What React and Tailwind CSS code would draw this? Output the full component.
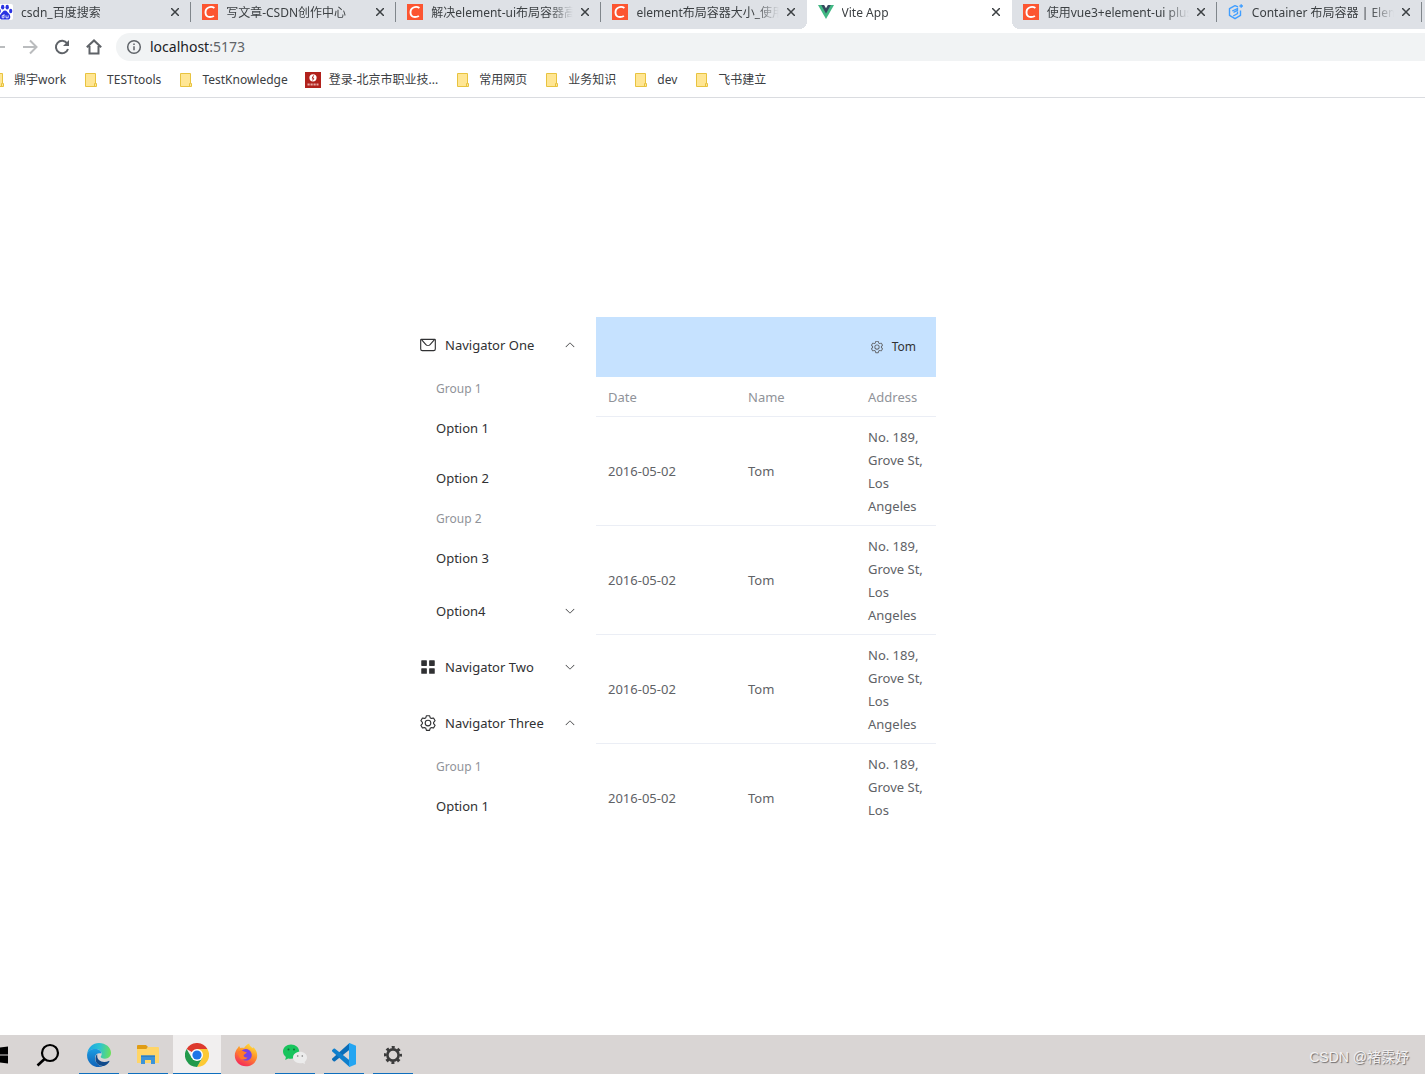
import React, { useState } from "react";

const tabs = [
  { title: "csdn_百度搜索", icon: "baidu" },
  { title: "写文章-CSDN创作中心", icon: "csdn" },
  { title: "解决element-ui布局容器高度", icon: "csdn" },
  { title: "element布局容器大小_使用vue", icon: "csdn" },
  { title: "Vite App", icon: "vue" },
  { title: "使用vue3+element-ui plus", icon: "csdn" },
  { title: "Container 布局容器 | Element", icon: "element" },
];

const bookmarks = [
  { title: "鼎宇work" },
  { title: "TESTtools" },
  { title: "TestKnowledge" },
  { title: "登录-北京市职业技...", site: true },
  { title: "常用网页" },
  { title: "业务知识" },
  { title: "dev" },
  { title: "飞书建立" },
];

const tableData = Array.from({ length: 4 }, (_, id) => ({
  id,
  date: "2016-05-02",
  name: "Tom",
  address: "No. 189, Grove St, Los Angeles",
}));

const messagePaths = [
  "M128 224v512a64 64 0 0 0 64 64h640a64 64 0 0 0 64-64V224H128zm0-64h768a64 64 0 0 1 64 64v512a128 128 0 0 1-128 128H192A128 128 0 0 1 64 736V224a64 64 0 0 1 64-64z",
  "M904 224 656.512 506.88a192 192 0 0 1-289.024 0L120 224h784zm-698.944 0 210.56 240.704a128 128 0 0 0 192.704 0L818.944 224H205.056z",
];
const settingPaths = [
  "M600.704 64a32 32 0 0 1 30.464 22.208l35.2 109.376c14.784 7.232 28.928 15.36 42.432 24.512l112.384-24.192a32 32 0 0 1 34.432 15.36L944.32 364.8a32 32 0 0 1-4.032 37.504l-77.12 85.12a357.12 357.12 0 0 1 0 49.024l77.12 85.248a32 32 0 0 1 4.032 37.504l-88.704 153.6a32 32 0 0 1-34.432 15.296L708.8 803.904c-13.44 9.088-27.648 17.28-42.368 24.512l-35.264 109.376A32 32 0 0 1 600.704 960H423.296a32 32 0 0 1-30.464-22.208L357.696 828.48a351.616 351.616 0 0 1-42.56-24.64l-112.32 24.256a32 32 0 0 1-34.432-15.36L79.68 659.2a32 32 0 0 1 4.032-37.504l77.12-85.248a357.12 357.12 0 0 1 0-48.896l-77.12-85.248A32 32 0 0 1 79.68 364.8l88.704-153.6a32 32 0 0 1 34.432-15.296l112.32 24.256c13.568-9.152 27.776-17.408 42.56-24.64l35.2-109.312A32 32 0 0 1 423.232 64H600.64zm-23.424 64H446.72l-36.352 113.088-24.512 11.968a294.113 294.113 0 0 0-34.816 20.096l-22.656 15.36-116.224-25.088-65.28 113.152 79.68 88.192-1.92 27.136a293.12 293.12 0 0 0 0 40.192l1.92 27.136-79.808 88.192 65.344 113.152 116.224-25.024 22.656 15.296a294.113 294.113 0 0 0 34.816 20.096l24.512 11.968L446.72 896h130.688l36.48-113.152 24.448-11.904a288.282 288.282 0 0 0 34.752-20.096l22.592-15.296 116.288 25.024 65.28-113.152-79.744-88.192 1.92-27.136a293.12 293.12 0 0 0 0-40.256l-1.92-27.136 79.808-88.128-65.344-113.152-116.288 24.96-22.592-15.232a287.616 287.616 0 0 0-34.752-20.096l-24.448-11.904L577.344 128zM512 320a192 192 0 1 1 0 384 192 192 0 0 1 0-384m0 64a128 128 0 1 0 0 256 128 128 0 0 0 0-256",
];
const menuPaths = [
  "M160 448a32 32 0 0 1-32-32V160a32 32 0 0 1 32-32h256a32 32 0 0 1 32 32v256a32 32 0 0 1-32 32zM608 448a32 32 0 0 1-32-32V160a32 32 0 0 1 32-32h256a32 32 0 0 1 32 32v256a32 32 0 0 1-32 32zM160 896a32 32 0 0 1-32-32V608a32 32 0 0 1 32-32h256a32 32 0 0 1 32 32v256a32 32 0 0 1-32 32zM608 896a32 32 0 0 1-32-32V608a32 32 0 0 1 32-32h256a32 32 0 0 1 32 32v256a32 32 0 0 1-32 32z",
];
const arrowPaths = [
  "M831.872 340.864 512 652.672 192.128 340.864a30.592 30.592 0 0 0-42.752 0 29.12 29.12 0 0 0 0 41.6L489.664 714.24a32 32 0 0 0 44.672 0l340.288-331.712a29.12 29.12 0 0 0 0-41.728 30.592 30.592 0 0 0-42.752 0z",
];

function ElIcon({ paths, className }) {
  return (
    <svg viewBox="0 0 1024 1024" fill="currentColor" className={className} aria-hidden="true">
      {paths.map((d) => (
        <path key={d} d={d} />
      ))}
    </svg>
  );
}

function Favicon({ name }) {
  if (name === "csdn") {
    return (
      <svg viewBox="0 0 16 16" className="size-4 shrink-0">
        <rect width="16" height="16" fill="#fc5531" />
        <path d="M12.4 4.1C10.8 2.9 8.3 2.7 6.5 3.5 4.4 4.4 3.4 6.5 3.5 8.7c.1 2.6 1.8 4.2 4.5 4.3 1.5 0 2.8-.3 3.9-1" fill="none" stroke="#fff" strokeWidth="1.9" />
      </svg>
    );
  }
  if (name === "vue") {
    return (
      <svg viewBox="0 0 16 16" className="size-4 shrink-0">
        <path d="M0 1h16L8 15z" fill="#41b883" />
        <path d="M3.2 1h9.6L8 9.4z" fill="#35495e" />
        <path d="M6.1 1h3.8L8 4.2z" fill="#fff" />
      </svg>
    );
  }
  if (name === "element") {
    return (
      <svg viewBox="0 0 16 16" className="size-4 shrink-0" fill="none" stroke="#409eff" strokeWidth="1.4">
        <path d="M10 2.9 7 1.6 1.5 4.6v6.8L7 14.7l5.5-3.3V6.5" strokeLinejoin="round" />
        <path d="M4.2 7 9.5 4.6v1.8L5.5 8.4M9.5 7.6v2L5.2 12" strokeWidth="1.3" />
        <path d="M13.2 .2v3.6M11.4 2h3.6" />
      </svg>
    );
  }
  return (
    <svg viewBox="0 0 16 16" className="size-4 shrink-0">
      <rect width="16" height="16" rx="2" fill="#fff" />
      <g fill="#2932e1">
        <ellipse cx="5.7" cy="3.2" rx="1.7" ry="2.4" />
        <ellipse cx="10.2" cy="3.2" rx="1.7" ry="2.4" />
        <ellipse cx="2.3" cy="7" rx="1.6" ry="2.2" />
        <ellipse cx="13.7" cy="7" rx="1.6" ry="2.2" />
        <path d="M8 6.5c2 0 2.6 2 4 3.2 1.6 1.4 2.2 5.8-1.2 5.8H5.2c-3.4 0-2.8-4.4-1.2-5.8C5.4 8.5 6 6.5 8 6.5z" />
      </g>
      <path d="M7 10v3.8H5.2v-2.2H7M9 11.4v2.4h2.2v-2.4" fill="none" stroke="#fff" strokeWidth=".8" />
    </svg>
  );
}

function Tab({ tab, active, onSelect }) {
  return (
    <div
      className={`relative flex min-w-0 flex-1 items-center pb-[5px] pl-[11px] pr-2 ${
        active
          ? "bg-white before:absolute before:bottom-0 before:-left-2 before:size-2 before:bg-[radial-gradient(circle_at_0_0,#dee1e6_8px,white_8px)] after:absolute after:bottom-0 after:-right-2 after:size-2 after:bg-[radial-gradient(circle_at_100%_0,#dee1e6_8px,white_8px)]"
          : ""
      }`}
    >
      <button onClick={onSelect} className="flex min-w-0 flex-1 items-center gap-2 text-left">
        <Favicon name={tab.icon} />
        <span className="min-w-0 flex-1 overflow-hidden whitespace-nowrap pt-0.5 leading-4 [mask-image:linear-gradient(to_left,transparent_4px,black_28px)]">
          {tab.title}
        </span>
      </button>
      <button aria-label={`Close ${tab.title}`} className="flex size-4 shrink-0 items-center justify-center">
        <svg viewBox="0 0 8 8" className="size-2" stroke="#3c4043" strokeWidth="1.5">
          <path d="M0 0l8 8M8 0L0 8" />
        </svg>
      </button>
    </div>
  );
}

function TabStrip() {
  const [current, setCurrent] = useState(4);
  return (
    <div className="-ml-[14px] flex h-[29px] bg-[#dee1e6] pr-[3px]">
      {tabs.map((tab, i) => (
        <React.Fragment key={tab.title}>
          <Tab tab={tab} active={i === current} onSelect={() => setCurrent(i)} />
          <span
            className={`mt-[2px] -ml-px h-5 w-px ${
              i === current || i + 1 === current ? "bg-transparent" : "bg-[#80868b]"
            }`}
          />
        </React.Fragment>
      ))}
    </div>
  );
}

function Toolbar() {
  return (
    <div className="flex h-9 items-center pb-1 pt-1 text-[#5f6368]">
      <div className="-ml-[10px] flex h-7 w-[126px] shrink-0 items-center gap-4">
        <button aria-label="Back" className="text-[#babcbe]">
          <svg viewBox="0 0 16 16" className="size-4" fill="none" stroke="currentColor" strokeWidth="2">
            <path d="M15 8H2M8 1L1.5 8 8 15" />
          </svg>
        </button>
        <button aria-label="Forward" className="text-[#babcbe]">
          <svg viewBox="0 0 16 16" className="size-4" fill="none" stroke="currentColor" strokeWidth="2">
            <path d="M1 8h13M8 1.5L14.5 8 8 14.5" />
          </svg>
        </button>
        <button aria-label="Reload">
          <svg viewBox="0 0 16 16" className="size-4" fill="none" stroke="currentColor" strokeWidth="2">
            <path d="M13.2 4.5A6.2 6.2 0 1 0 14 10" />
            <path d="M15 1v6H9z" fill="currentColor" stroke="none" />
          </svg>
        </button>
        <button aria-label="Home">
          <svg viewBox="0 0 16 16" className="size-4" fill="none" stroke="currentColor" strokeWidth="2">
            <path d="M.8 8.2L8 1.4l7.2 6.8M3.5 7v7.5h9V7" />
          </svg>
        </button>
      </div>
      <div className="flex h-7 flex-1 items-center gap-2 rounded-l-full bg-[#f1f3f4] pl-[10px]">
        <svg viewBox="0 0 16 16" className="size-4" fill="none" stroke="currentColor" strokeWidth="1.5">
          <circle cx="8" cy="8" r="6.3" />
          <path d="M8 7.2v4M8 4.5V6" />
        </svg>
        <a href="http://localhost:5173" className="text-sm leading-5 text-[#5f6368]">
          <span className="text-[#202124]">localhost</span>:5173
        </a>
      </div>
    </div>
  );
}

function BookmarkIcon({ site }) {
  if (site) {
    return (
      <svg viewBox="0 0 16 16" className="size-4 shrink-0">
        <rect width="16" height="16" fill="#b1211c" />
        <circle cx="8" cy="5.8" r="3.6" fill="#fff" />
        <path d="M8.6 3.4L7.2 6.2h1.6L7.6 8.4" stroke="#b1211c" fill="none" />
        <path d="M2.5 12.5h11" stroke="#e8a9a5" strokeWidth="2" strokeDasharray="2.2 .8" />
      </svg>
    );
  }
  return (
    <svg viewBox="0 0 16 16" className="size-4 shrink-0">
      <path d="M2.5 1.5h10v10h1v3h-11z" fill="#ffe694" stroke="#e8c33f" />
      <path d="M11.5 14.5v-3h1" fill="none" stroke="#e8c33f" />
    </svg>
  );
}

function Bookmarks() {
  return (
    <nav className="-ml-[10px] flex h-[33px] items-center gap-[17px] border-b border-[#dadce0] pb-[3px]">
      {bookmarks.map((item) => (
        <a key={item.title} href="#" className="flex shrink-0 items-center gap-2 leading-4">
          <BookmarkIcon site={item.site} />
          {item.title}
        </a>
      ))}
    </nav>
  );
}

function SubMenuTitle({ icon, title, open, nested, onClick }) {
  return (
    <button
      onClick={onClick}
      className={`flex h-14 w-full items-center pr-5 text-left ${nested ? "pl-10" : "pl-5"}`}
    >
      {icon && (
        <span className="mr-[5px] flex w-6 justify-center">
          <ElIcon paths={icon} className="size-[18px]" />
        </span>
      )}
      <span className="flex-1">{title}</span>
      <ElIcon paths={arrowPaths} className={open ? "size-3 rotate-180" : "size-3"} />
    </button>
  );
}

function MenuGroup({ title, options }) {
  return (
    <div>
      <div className="pb-1.5 pl-10 pt-2 text-xs leading-4 text-[#909399]">{title}</div>
      {options.map((option) => (
        <a key={option} href="#" className="flex h-[50px] items-center pl-10">
          {option}
        </a>
      ))}
    </div>
  );
}

function Aside() {
  const [opened, setOpened] = useState(["1", "3"]);
  const toggle = (index) =>
    setOpened((prev) => (prev.includes(index) ? prev.filter((i) => i !== index) : [...prev, index]));

  const groups = (
    <>
      <MenuGroup title="Group 1" options={["Option 1", "Option 2"]} />
      <MenuGroup title="Group 2" options={["Option 3"]} />
      <SubMenuTitle title="Option4" nested />
    </>
  );

  return (
    <aside className="w-[200px] shrink-0 overflow-y-auto text-[#303133] [scrollbar-width:none]">
      <SubMenuTitle icon={messagePaths} title="Navigator One" open={opened.includes("1")} onClick={() => toggle("1")} />
      {opened.includes("1") && groups}
      <SubMenuTitle icon={menuPaths} title="Navigator Two" open={opened.includes("2")} onClick={() => toggle("2")} />
      {opened.includes("2") && groups}
      <SubMenuTitle icon={settingPaths} title="Navigator Three" open={opened.includes("3")} onClick={() => toggle("3")} />
      {opened.includes("3") && <MenuGroup title="Group 1" options={["Option 1"]} />}
    </aside>
  );
}

function DataTable() {
  return (
    <table className="w-full table-fixed text-left leading-[23px] text-[#606266]">
      <thead>
        <tr className="border-b border-[#ebeef5] text-[#909399]">
          <th className="w-[140px] px-3 pb-[7px] pt-[9px] font-normal">Date</th>
          <th className="w-[120px] px-3 pb-[7px] pt-[9px] font-normal">Name</th>
          <th className="px-3 pb-[7px] pt-[9px] font-normal">Address</th>
        </tr>
      </thead>
      <tbody>
        {tableData.map((row) => (
          <tr key={row.id} className="border-b border-[#ebeef5]">
            <td className="px-3 pb-[7px] pt-[9px]">{row.date}</td>
            <td className="px-3 pb-[7px] pt-[9px]">{row.name}</td>
            <td className="px-3 pb-[7px] pt-[9px]">{row.address}</td>
          </tr>
        ))}
      </tbody>
    </table>
  );
}

function EdgeLogo() {
  return (
    <svg viewBox="0 0 24 24" className="size-6">
      <defs>
        <linearGradient id="edgeTop" x1="0" y1=".4" x2="1" y2=".5">
          <stop offset="0" stopColor="#1ba4e4" />
          <stop offset=".5" stopColor="#2bc3d2" />
          <stop offset="1" stopColor="#6be05a" />
        </linearGradient>
        <linearGradient id="edgeLow" x1="0" y1="0" x2="0" y2="1">
          <stop offset="0" stopColor="#1b9de2" />
          <stop offset="1" stopColor="#0f61b8" />
        </linearGradient>
      </defs>
      <path d="M.2 11C.8 4.6 6 0 12 0c6.6 0 12 4.3 12 9.8 0 3.7-2.7 5.9-6 5.9-3 0-4.3-1-4.3-1.9 0-.7 1-1.1 1-3 0-2.6-2.4-4.8-6-4.8C4 6 1.2 8.3.2 11z" fill="url(#edgeTop)" />
      <path d="M.1 11.5C.6 8 4 6 8.2 6c3.6 0 6.3 2 6.3 4.6-3.2-1.4-6.5.6-6.5 4.4 0 4 3 8 8 8.2-1.3.5-2.6.8-4 .8C5 24-.4 18.5.1 11.5z" fill="url(#edgeLow)" />
      <path d="M10.3 11.3C7 13 7.5 24 17 22.9c2.3-.9 4.2-2.5 5.4-4.5.2-.4-.2-.7-.6-.5-5.2 2.5-12.6.6-11.5-6.6z" fill="#114a8b" />
    </svg>
  );
}

function ExplorerLogo() {
  return (
    <svg viewBox="0 0 24 24" className="size-6">
      <path d="M1 3a1 1 0 0 1 1-1h8l2 2-1.5 2H1z" fill="#e09c14" />
      <path d="M1 6h9.5L12 4h10a1 1 0 0 1 1 1v15H1z" fill="#ffd567" />
      <path d="M5 12.5h14V21h-4v-4H9v4H5z" fill="#3c93d8" />
      <path d="M5 12.5h14V14H5z" fill="#2d7fc4" />
    </svg>
  );
}

function ChromeLogo() {
  return (
    <svg viewBox="0 0 24 24" className="size-6">
      <path d="M12 12L1.6 6A12 12 0 0 1 22.4 6z" fill="#dd3a2e" />
      <path d="M12 12V6h10.4A12 12 0 0 1 12 24l5.2-9z" fill="#fcc934" />
      <path d="M12 12l5.2 3L12 24A12 12 0 0 1 1.6 6l5.2 9z" fill="#229a4c" />
      <circle cx="12" cy="12" r="6" fill="#fff" />
      <circle cx="12" cy="12" r="4.6" fill="#1f74e8" />
    </svg>
  );
}

function FirefoxLogo() {
  return (
    <svg viewBox="0 0 24 24" className="size-6">
      <defs>
        <linearGradient id="foxBody" x1=".8" y1="0" x2=".3" y2="1">
          <stop offset="0" stopColor="#ffe93b" />
          <stop offset=".45" stopColor="#ff9229" />
          <stop offset="1" stopColor="#f5245c" />
        </linearGradient>
      </defs>
      <path d="M3.8 5c.3-.8 1-1.6 1.5-2 .1.8.5 1.5 1 2 1.2-.4 2.6-.4 3.8 0C11 3.5 13 1 15.2.5c0 2 1.6 3 3.4 4.8.4-.2.3-.8.3-1.2C21.5 6 23.2 9 23.2 12.5 23.2 18.5 18.2 23.3 12 23.3S.8 18.5.8 12.5C.8 9.5 2 7 3.8 5z" fill="url(#foxBody)" />
      <path d="M7 9c1-2.5 5-4 8-2 2.8 1.8 3.5 5.5 2 8-1.5 2.4-5 3.3-7.5 2C7 15.7 6 12 7 9z" fill="#7542e5" />
      <path d="M4 9c1.5-1.8 4-2 6-.6 1 .7 2 .4 2.7.8-.4 1.5-2.2 1.8-3 2.8-.4 2 1.7 3 3.8 2.3-1 2.7-5.5 3-7.5.7C4.6 13.3 4 11 4 9z" fill="#ff7a29" />
    </svg>
  );
}

function WechatLogo() {
  return (
    <svg viewBox="0 0 24 24" className="size-6">
      <path d="M8 1.5C3.5 1.5 0 4.6 0 8.5c0 2.2 1.1 4.1 2.9 5.4L2.2 17l3-1.6c.9.2 1.8.4 2.8.4 4.5 0 8.2-3.2 8.2-7.2S12.500 1.5 8 1.5z" fill="#18c45d" />
      <circle cx="5.5" cy="6.5" r="1" fill="#136b38" />
      <circle cx="11" cy="6.5" r="1" fill="#136b38" />
      <path d="M17 8.8c4 0 7 2.6 7 5.8 0 1.7-.9 3.2-2.4 4.3l.5 2.1-2.4-1.1c-.9.3-1.7.4-2.7.4-3.9 0-7-2.5-7-5.7s3.1-5.8 7-5.8z" fill="#ececec" />
      <circle cx="14.7" cy="13" r=".8" fill="#777" />
      <circle cx="19.3" cy="13" r=".8" fill="#777" />
    </svg>
  );
}

function VscodeLogo() {
  return (
    <svg viewBox="0 0 24 24" className="size-6">
      <path d="M0 15.8L17.5 0v6.7L3 18.3c-.5.4-1 .3-1.4 0L.2 17c-.3-.4-.3-.8-.2-1.2z" fill="#0a6db8" />
      <path d="M0 8.2L17.5 24v-6.7L3 5.7c-.5-.4-1-.3-1.4 0L.2 7c-.3.4-.3.8-.2 1.2z" fill="#0f7fcc" />
      <path d="M17.5 0L24 2.8v18.4L17.5 24c-.6 0-.5-.6-.5-1V1c0-.4 0-1 .5-1z" fill="#24a5f2" />
    </svg>
  );
}

function GearLogo() {
  return (
    <svg viewBox="0 0 24 24" className="size-6" fill="none" stroke="#3b3b3b">
      <circle cx="12" cy="12" r="5.6" strokeWidth="2.6" />
      <circle cx="12" cy="12" r="7.7" strokeWidth="2.6" strokeDasharray="3 3.048" strokeDashoffset="1.5" />
    </svg>
  );
}

function StartLogo() {
  return (
    <svg viewBox="0 0 18 18" className="size-[18px]" fill="#000">
      <path d="M0 3l8-1.2v6.8H0zM9 1.7L18 .5v8.1H9zM0 9.6h8v6.8L0 15.2zM9 9.6h9v7.9l-9-1.2z" />
    </svg>
  );
}

function SearchLogo() {
  return (
    <svg viewBox="0 0 24 24" className="size-6" fill="none" stroke="#000" strokeWidth="2.2">
      <circle cx="14" cy="10" r="8" />
      <path d="M8.5 16L1.5 22.5" strokeWidth="2.6" />
    </svg>
  );
}

const apps = [
  { name: "Edge", Logo: EdgeLogo, running: true },
  { name: "Explorer", Logo: ExplorerLogo, running: true },
  { name: "Chrome", Logo: ChromeLogo, running: true, focused: true },
  { name: "Firefox", Logo: FirefoxLogo },
  { name: "WeChat", Logo: WechatLogo, running: true },
  { name: "VS Code", Logo: VscodeLogo, running: true },
  { name: "Settings", Logo: GearLogo, running: true },
];

function Taskbar() {
  return (
    <footer className="flex h-[39px] items-stretch justify-between bg-[#d9d5d4]">
      <div className="-ml-[25px] flex gap-px">
        <button aria-label="Start" className="flex w-12 items-center justify-center">
          <StartLogo />
        </button>
        <button aria-label="Search" className="mr-[2px] flex w-12 items-center justify-center">
          <SearchLogo />
        </button>
        {apps.map(({ name, Logo, running, focused }) => (
          <button
            key={name}
            aria-label={name}
            className={`flex w-12 flex-col items-center ${focused ? "bg-[#f1efef]" : ""}`}
          >
            <span className="flex flex-1 items-center pt-px">
              <Logo />
            </span>
            {running && <span className={`h-px bg-[#0f6fbe] ${focused ? "w-full" : "w-10"}`} />}
          </button>
        ))}
      </div>
      <span className="self-center pr-4 pt-1 font-['Liberation_Sans','Noto_Sans_CJK_SC',sans-serif] text-sm leading-5 text-[#f3f1f1] [text-shadow:1px_1px_1px_#6e6b6b]">
        CSDN @褚霂妤
      </span>
    </footer>
  );
}

function App() {
  return (
    <div className="flex min-h-screen flex-col overflow-hidden bg-white font-['Noto_Sans','Noto_Sans_CJK_SC',sans-serif] text-xs text-[#3c4043]">
      <header>
        <TabStrip />
        <Toolbar />
        <Bookmarks />
      </header>
      <main className="flex flex-1 items-center justify-center pr-[93px]">
        <div className="flex h-[500px] w-[540px] text-[13px] leading-5">
          <Aside />
          <section className="min-w-0 flex-1 overflow-y-auto [scrollbar-width:none]">
            <div className="flex h-[60px] items-center justify-end gap-2 bg-[#c6e2ff] px-5 text-xs text-[#303133]">
              <button aria-label="Settings" className="text-[#606266]">
                <ElIcon paths={settingPaths} className="size-[14px]" />
              </button>
              <span>Tom</span>
            </div>
            <DataTable />
          </section>
        </div>
      </main>
      <Taskbar />
    </div>
  );
}

export default App;
